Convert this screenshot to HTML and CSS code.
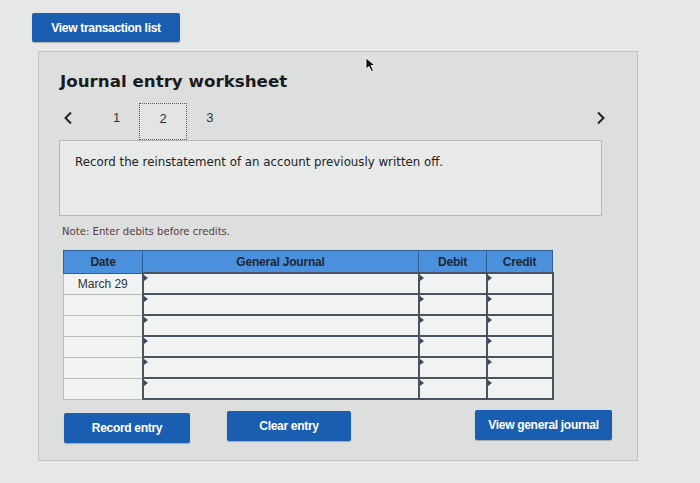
FILE: index.html
```html
<!DOCTYPE html>
<html>
<head>
<meta charset="utf-8">
<link rel="stylesheet" href="styles.css">
</head>
<body>
<button class="btn btn-top">View transaction list</button>
<div class="panel">
  <h1 class="title">Journal entry worksheet</h1>
  <div class="nav">
    <span class="chev left">
      <svg width="10" height="14" viewBox="0 0 10 14"><path d="M8 1.5 L2.5 7 L8 12.5" fill="none" stroke="#222" stroke-width="2"/></svg>
    </span>
    <span class="step s1">1</span>
    <span class="step cur">2</span>
    <span class="step s3">3</span>
    <span class="chev right">
      <svg width="10" height="14" viewBox="0 0 10 14"><path d="M2 1.5 L7.5 7 L2 12.5" fill="none" stroke="#222" stroke-width="2"/></svg>
    </span>
  </div>
  <div class="desc">Record the reinstatement of an account previously written off.</div>
  <div class="note">Note: Enter debits before credits.</div>
  <table class="jt">
    <thead>
      <tr><th class="c-date">Date</th><th class="c-gj">General Journal</th><th class="c-dr">Debit</th><th class="c-cr">Credit</th></tr>
    </thead>
    <tbody>
      <tr><td class="d">March 29</td><td class="in"></td><td class="in"></td><td class="in"></td></tr>
      <tr><td class="d"></td><td class="in"></td><td class="in"></td><td class="in"></td></tr>
      <tr><td class="d"></td><td class="in"></td><td class="in"></td><td class="in"></td></tr>
      <tr><td class="d"></td><td class="in"></td><td class="in"></td><td class="in"></td></tr>
      <tr><td class="d"></td><td class="in"></td><td class="in"></td><td class="in"></td></tr>
      <tr><td class="d"></td><td class="in"></td><td class="in"></td><td class="in"></td></tr>
    </tbody>
  </table>
  <div class="actions">
    <button class="btn b-record">Record entry</button>
    <button class="btn b-clear">Clear entry</button>
    <button class="btn b-view">View general journal</button>
  </div>
  <svg class="cursor" width="12" height="16" viewBox="0 0 12 16"><path d="M1 1 L1 12 L4 9.5 L6.5 14.5 L8.5 13.5 L6 8.5 L10 8.5 Z" fill="#111" stroke="#fff" stroke-width="0.8"/></svg>
</div>
</body>
</html>
```

FILE: styles.css
```css
html, body {
  margin: 0;
  padding: 0;
}
body {
  background: #e6e7e7;
  width: 700px;
  height: 483px;
  overflow: hidden;
  padding: 13px 0 0 32px;
  box-sizing: border-box;
  font-family: "DejaVu Sans", Verdana, sans-serif;
  color: #222;
}
.btn {
  display: flex;
  align-items: center;
  justify-content: center;
  background: #1a5eb2;
  color: #fff;
  border: none;
  border-radius: 2px;
  font-family: "Liberation Sans", Arial, sans-serif;
  font-weight: bold;
  font-size: 12px;
  letter-spacing: -0.3px;
  padding: 0;
  box-shadow: 0 1px 1px rgba(0,0,0,0.25);
}
.btn-top {
  width: 148px;
  height: 29px;
}
.panel {
  position: relative;
  margin: 9px 0 0 6px;
  width: 600px;
  height: 410px;
  box-sizing: border-box;
  border: 1px solid #bfc0c0;
  background: #dddede;
  padding: 0 0 0 20px;
}
.title {
  margin: 18px 0 0 1px;
  font-size: 16.7px;
  font-weight: bold;
  line-height: 22px;
  color: #1b1b1b;
}
.nav {
  display: flex;
  align-items: flex-start;
  height: 37px;
  margin-top: 11px;
  font-family: "Liberation Sans", Arial, sans-serif;
  font-size: 13px;
  line-height: 15px;
  color: #333;
}
.step {
  padding-top: 7px;
}
.chev {
  display: flex;
  padding-top: 8px;
}
.chev.left {
  margin-left: 4px;
}
.step.s1 {
  margin-left: 40px;
}
.step.cur {
  margin-left: 19px;
  width: 48px;
  height: 37px;
  box-sizing: border-box;
  border: 1px dotted #555;
  display: flex;
  justify-content: center;
  background: #e3e4e4;
}
.step.s3 {
  margin-left: 19px;
}
.chev.right {
  margin-left: auto;
  margin-right: 31px;
}
.desc {
  width: 543px;
  height: 76px;
  box-sizing: border-box;
  border: 1px solid #b5b6b6;
  background: #e8e9e9;
  padding: 14px 0 0 15px;
  font-size: 11.8px;
  color: #222;
}
.note {
  margin: 10px 0 0 3px;
  font-size: 10.1px;
  color: #5a3c3c;
  line-height: 12px;
}
.jt {
  margin: 12px 0 0 4px;
  border-collapse: collapse;
  width: 487px;
  table-layout: fixed;
  font-family: "Liberation Sans", Arial, sans-serif;
}
.jt th {
  background: #4b90dc;
  height: 21px;
  padding: 0;
  border: 1px solid #2e5f97;
  font-size: 12px;
  font-weight: bold;
  color: #1c2838;
  letter-spacing: -0.2px;
}
.c-date { width: 78px; }
.c-gj { width: 275px; }
.c-dr { width: 67px; }
.c-cr { width: 65px; }
.jt td {
  height: 19px;
  padding: 0;
  background: #f1f2f2;
}
.jt td.d {
  border: 1px solid #b9baba;
  border-right: 2px solid #4a5460;
  font-size: 12px;
  color: #333;
  text-align: center;
}
.jt td.in {
  position: relative;
  border: 2px solid #4a5460;
}
.jt td.in::before {
  content: "";
  position: absolute;
  left: 0;
  top: 1px;
  border-top: 3px solid transparent;
  border-bottom: 3px solid transparent;
  border-left: 4px solid #3b4a5c;
}
.actions {
  display: flex;
  align-items: flex-start;
  margin-top: 10px;
}
.b-record {
  width: 126px;
  height: 30px;
  margin-left: 5px;
  margin-top: 3px;
}
.b-clear {
  width: 124px;
  height: 30px;
  margin-left: 37px;
  margin-top: 1px;
}
.b-view {
  width: 137px;
  height: 30px;
  margin-left: 124px;
}
.cursor {
  position: absolute;
  left: 326px;
  top: 5px;
}
```
